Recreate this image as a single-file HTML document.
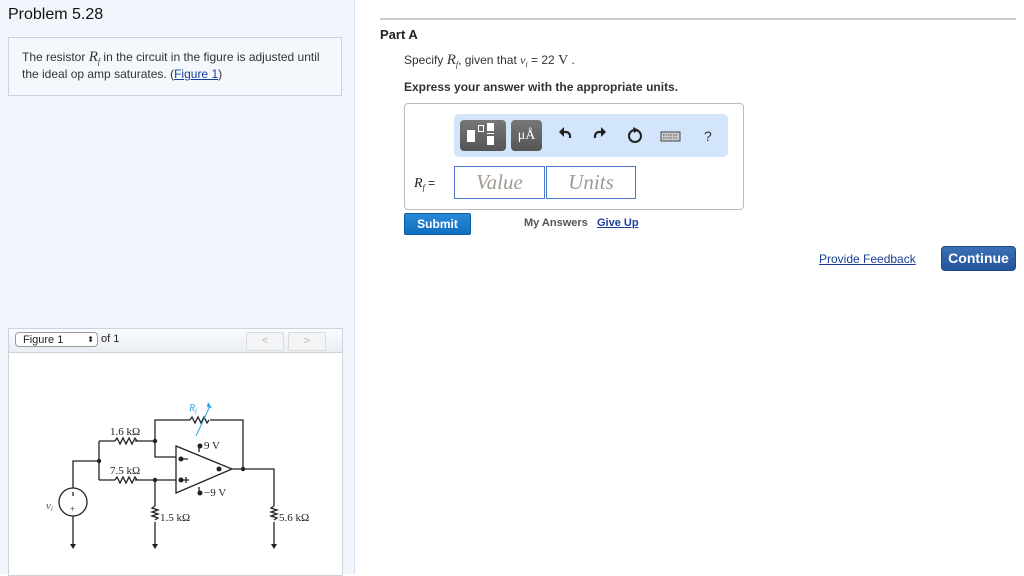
<!DOCTYPE html>
<html><head><meta charset="utf-8"><style>
body{margin:0;width:1024px;height:574px;overflow:hidden;font-family:"Liberation Sans",Arial,sans-serif;background:#fff;position:relative;color:#222}
.abs{position:absolute}
#left{left:0;top:0;width:354px;height:574px;background:#f1f6fd;border-right:1px solid #d6e0ec}
.serif{font-family:"Liberation Serif",serif;font-style:italic;line-height:0}
.sb{font-size:8px;position:relative;top:3px;line-height:0}
a{color:#1a3f99}
</style></head><body>
<div id="left" class="abs">
<div class="abs" style="left:8px;top:6px;font-size:16px;color:#111">Problem 5.28</div>
<div class="abs" style="left:8px;top:37px;width:332px;height:57px;border:1px solid #c6d4e4;background:#f4f8fc"></div>
<div class="abs" style="left:22px;top:49px;font-size:12px;line-height:17px;color:#333">The resistor <span class="serif" style="font-size:15px">R<span class="sb">f</span></span> in the circuit in the figure is adjusted until<br>the ideal op amp saturates. (<a href="#">Figure 1</a>)</div>
<div class="abs" style="left:8px;top:328px;width:333px;height:24px;background:linear-gradient(#fafbfd,#e9edf2);border:1px solid #c9d3de"></div>
<div class="abs" style="left:15px;top:332px;width:83px;height:15px;border:1px solid #999;border-radius:4px;background:#fff;font-size:11px;line-height:14px;padding-left:7px;box-sizing:border-box">Figure 1<span style="position:absolute;right:3px;font-size:8px">⬍</span></div>
<div class="abs" style="left:101px;top:333px;font-size:11px">of 1</div>
<div class="abs" style="left:246px;top:332px;width:36px;height:17px;border:1px solid #ddd;border-radius:2px;text-align:center;color:#bbb;font-size:11px;line-height:17px;background:#f2f4f6">&lt;</div>
<div class="abs" style="left:288px;top:332px;width:36px;height:17px;border:1px solid #ddd;border-radius:2px;text-align:center;color:#bbb;font-size:11px;line-height:17px;background:#f2f4f6">&gt;</div>
<div class="abs" style="left:8px;top:352px;width:333px;height:222px;background:#fff;border:1px solid #c9d3de"></div>
<svg class="abs" style="left:0;top:0" width="354" height="574">
<g stroke="#222" stroke-width="1.3" fill="none">
<path d="M73,488 V461 H99 M99,441 V480 M99,441 H115 M135,441 H155 V457 H176 M155,441 V420 H190 M210,420 H243 V469 M99,480 H115 M135,480 H176 M155,480 V506 M155,522 V544 M232,469 H274 V506 M274,522 V544 M73,516 V544"/>
<path d="M115,441 l2,-3 l3,6 l3,-6 l3,6 l3,-6 l3,6 l3,-6 l2,3"/>
<path d="M115,480 l2,-3 l3,6 l3,-6 l3,6 l3,-6 l3,6 l3,-6 l2,3"/>
<path d="M190,420 l2,-3 l3,6 l3,-6 l3,6 l3,-6 l3,6 l2,-3"/>
<path d="M155,506 l-3,2 l6,2 l-6,2 l6,2 l-6,2 l6,2 l-3,2"/>
<path d="M274,506 l-3,2 l6,2 l-6,2 l6,2 l-6,2 l6,2 l-3,2"/>
<path d="M176,446 V493 L232,469 Z"/>
<circle cx="73" cy="502" r="14"/>
<path d="M199,446 V452 M199,487 V493 M183,459 H188 M183,480 H189 M186,477 V483"/>
<path d="M73,492 v4"/>
</g>
<g fill="#222">
<circle cx="99" cy="461" r="2.2"/><circle cx="155" cy="441" r="2.2"/><circle cx="155" cy="480" r="2.2"/><circle cx="243" cy="469" r="2.2"/>
<circle cx="181" cy="459" r="2.5"/><circle cx="181" cy="480" r="2.5"/><circle cx="200" cy="446" r="2.5"/><circle cx="200" cy="493" r="2.5"/><circle cx="219" cy="469" r="2.5"/>
<path d="M70,544 h6 l-3,5z M152,544 h6 l-3,5z M271,544 h6 l-3,5z"/>
</g>
<path d="M196,436 L210,406" stroke="#29a8e0" stroke-width="1"/><path d="M208,402 l4,6 l-5,-1z" fill="#29a8e0"/>
<g font-family="Liberation Serif,serif" font-size="11" fill="#222">
<text x="110" y="435">1.6 kΩ</text><text x="110" y="474">7.5 kΩ</text>
<text x="204" y="449">9 V</text><text x="204" y="496">−9 V</text>
<text x="160" y="521">1.5 kΩ</text><text x="279" y="521">5.6 kΩ</text>
<text x="46" y="509" font-style="italic" fill="#555">v<tspan font-size="7" dy="2">i</tspan></text>
<text x="189" y="411" font-style="italic" fill="#29a8e0" font-size="10">R<tspan font-size="6" dy="2">f</tspan></text>
<text x="70" y="512" font-size="9">+</text>
</g>
</svg>
</div>
<div class="abs" style="left:380px;top:18px;width:636px;height:2px;background:#ccc"></div>
<div class="abs" style="left:380px;top:27px;font-size:13px;font-weight:bold">Part A</div>
<div class="abs" style="left:404px;top:53px;font-size:12px;color:#333">Specify <span class="serif" style="font-size:15px">R<span class="sb">f</span></span>, given that <span class="serif">v<span class="sb">i</span></span> = 22 <span style="font-family:'Liberation Serif';font-size:14px;line-height:0">V</span> .</div>
<div class="abs" style="left:404px;top:80px;font-size:12px;font-weight:bold;color:#333">Express your answer with the appropriate units.</div>
<div class="abs" style="left:404px;top:103px;width:338px;height:105px;border:1px solid #bbb;border-radius:4px"></div>
<div class="abs" style="left:454px;top:114px;width:274px;height:43px;background:#d3e5fa;border-radius:5px"></div>
<div class="abs" style="left:460px;top:120px;width:46px;height:31px;background:linear-gradient(#777,#555);border-radius:4px"></div>
<div class="abs" style="left:467px;top:130px;width:8px;height:12px;background:#fff"></div>
<div class="abs" style="left:478px;top:125px;width:4px;height:5px;border:1px solid #fff"></div>
<div class="abs" style="left:487px;top:123px;width:7px;height:8px;background:#fff"></div>
<div class="abs" style="left:487px;top:133px;width:7px;height:1px;background:#fff"></div>
<div class="abs" style="left:487px;top:136px;width:7px;height:9px;background:#fff"></div>
<div class="abs" style="left:511px;top:120px;width:31px;height:31px;background:linear-gradient(#777,#555);border-radius:4px;color:#fff;font-family:'Liberation Serif';font-size:14px;text-align:center;line-height:32px">μÅ</div>
<svg class="abs" style="left:555px;top:124px" width="170" height="24">
<path d="M15,14 v-2 a4,4 0 0 0 -4,-4 h-6" stroke="#222" stroke-width="2.2" fill="none"/><path d="M4,8 l5,-5 v10z" fill="#222"/>
<path d="M40,14 v-2 a4,4 0 0 1 4,-4 h6" stroke="#222" stroke-width="2.2" fill="none"/><path d="M51,8 l-5,-5 v10z" fill="#222"/>
<circle cx="80" cy="12" r="6" stroke="#222" stroke-width="2" fill="none"/><path d="M78,3 l6,3 l-5,3z" fill="#222"/>
<rect x="106" y="8" width="19" height="9" fill="#ccc" stroke="#444"/><path d="M108,11 h15 M108,14 h15" stroke="#555" stroke-dasharray="1.5 1"/>
<text x="149" y="17" font-family="Liberation Sans" font-size="14" fill="#333">?</text>
</svg>
<div class="abs" style="left:414px;top:176px;font-size:12px"><span class="serif" style="font-size:14px">R<span class="sb">f</span></span> =</div>
<div class="abs" style="left:454px;top:166px;width:89px;height:31px;border:1px solid #4c77c9;font-family:'Liberation Serif';font-style:italic;font-size:21px;color:#a09a92;text-align:center;line-height:31px">Value</div>
<div class="abs" style="left:546px;top:166px;width:88px;height:31px;border:1px solid #4c77c9;font-family:'Liberation Serif';font-style:italic;font-size:21px;color:#a09a92;text-align:center;line-height:31px">Units</div>
<div class="abs" style="left:404px;top:213px;width:65px;height:20px;background:linear-gradient(#2a8ad8,#0f6fc0);border:1px solid #0d5fa5;border-radius:2px;color:#fff;font-weight:bold;font-size:12px;text-align:center;line-height:20px">Submit</div>
<div class="abs" style="left:524px;top:217px;font-size:11px;font-weight:bold;color:#555">My Answers</div>
<div class="abs" style="left:597px;top:217px;font-size:11px;font-weight:bold"><a href="#">Give Up</a></div>
<div class="abs" style="left:819px;top:252px;font-size:12px"><a href="#">Provide Feedback</a></div>
<div class="abs" style="left:941px;top:246px;width:73px;height:23px;background:linear-gradient(#3d6fb4,#22549a);border:1px solid #1d4785;border-radius:4px;color:#fff;font-weight:bold;font-size:14px;text-align:center;line-height:23px">Continue</div>
</body></html>
